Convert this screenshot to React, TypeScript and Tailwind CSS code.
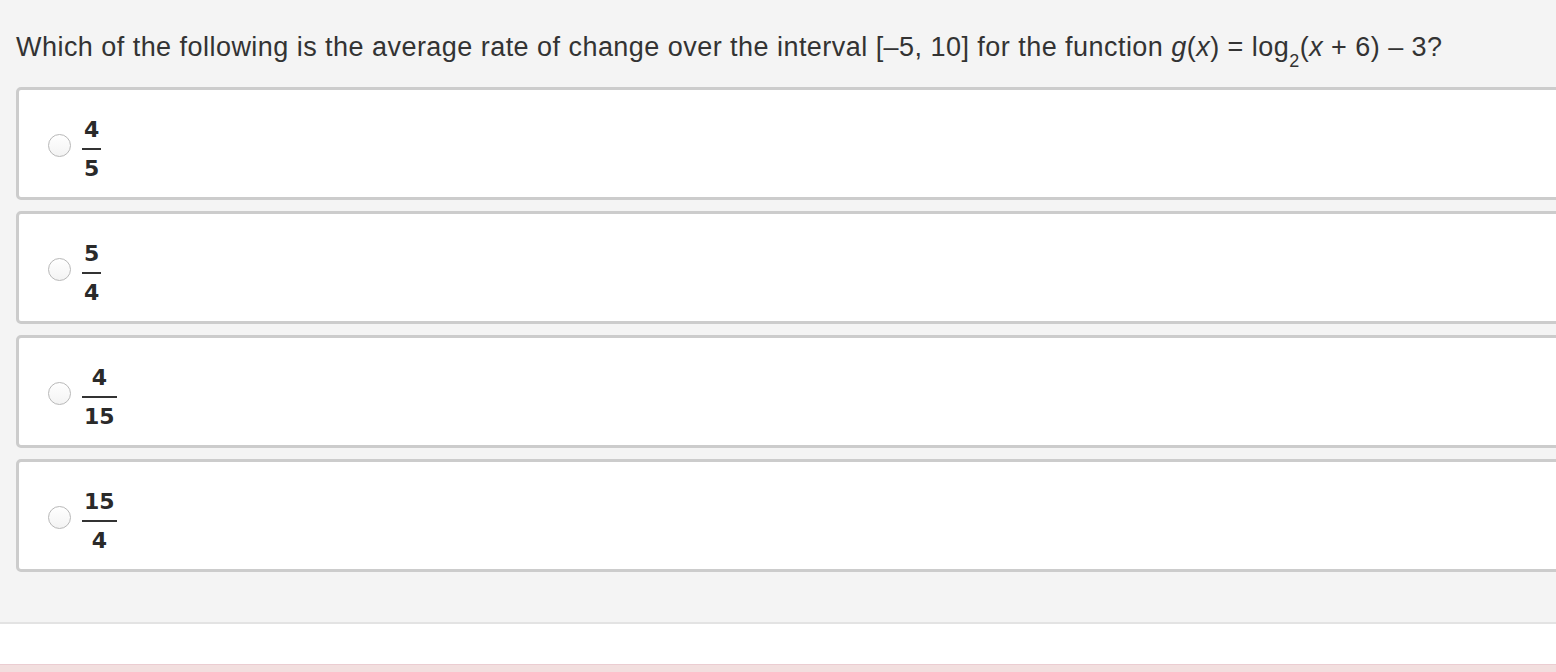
import React, { useState } from 'react';

type Choice = { num: string; den: string };

const choices: Choice[] = [
  { num: '4', den: '5' },
  { num: '5', den: '4' },
  { num: '4', den: '15' },
  { num: '15', den: '4' },
];

const Fraction: React.FC<Choice> = ({ num, den }) => (
  <span className="mt-[12px] inline-flex flex-col items-stretch font-['DejaVu_Sans',sans-serif] font-bold text-[22px] leading-[28px] text-[#2a2a2a]">
    <span className="text-center px-[2px]">{num}</span>
    <span className="h-[2px] bg-[#333] mt-[4px] mb-[5px]" />
    <span className="text-center px-[2px]">{den}</span>
  </span>
);

const App: React.FC = () => {
  const [picked, setPicked] = useState<number | null>(null);

  return (
    <div className="w-full h-screen overflow-hidden flex flex-col bg-white font-['Liberation_Sans',Arial,sans-serif]">
      {/* Question area */}
      <div className="bg-[#f4f4f4] pl-4 pt-[30px] pb-[50px] border-b-2 border-[#e3e3e3]">
        <p className="text-[27px] leading-[34px] text-[#333] whitespace-nowrap tracking-[0.46px]">
          Which of the following is the average rate of change over the interval [–5, 10] for the function{' '}
          <i>g</i>(<i>x</i>) = log<sub className="text-[18px] leading-none align-[-6px]">2</sub>(<i>x</i> + 6) – 3?
        </p>

        {/* Choices */}
        <div className="mt-[22px] flex flex-col gap-[11px] mr-[-20px]">
          {choices.map((c, i) => (
            <label
              key={i}
              onClick={() => setPicked(i)}
              className="h-[113px] bg-white border-[3px] border-[#cccccc] rounded-[5px] flex items-center pl-[29px] gap-[11px] cursor-pointer"
            >
              <span className="mt-[4px] w-[23px] h-[23px] rounded-full border border-[#b8b8b8] bg-gradient-to-b from-white to-[#f3f3f3] flex items-center justify-center">
                {picked === i && <span className="w-[9px] h-[9px] rounded-full bg-[#2f7de1]" />}
              </span>
              <Fraction num={c.num} den={c.den} />
            </label>
          ))}
        </div>
      </div>

      {/* Footer strip */}
      <div className="h-[40px] bg-white" />
      <div className="flex-1 bg-[#f2dede] border-t border-[#ebccd1]" />
    </div>
  );
};

export default App;
